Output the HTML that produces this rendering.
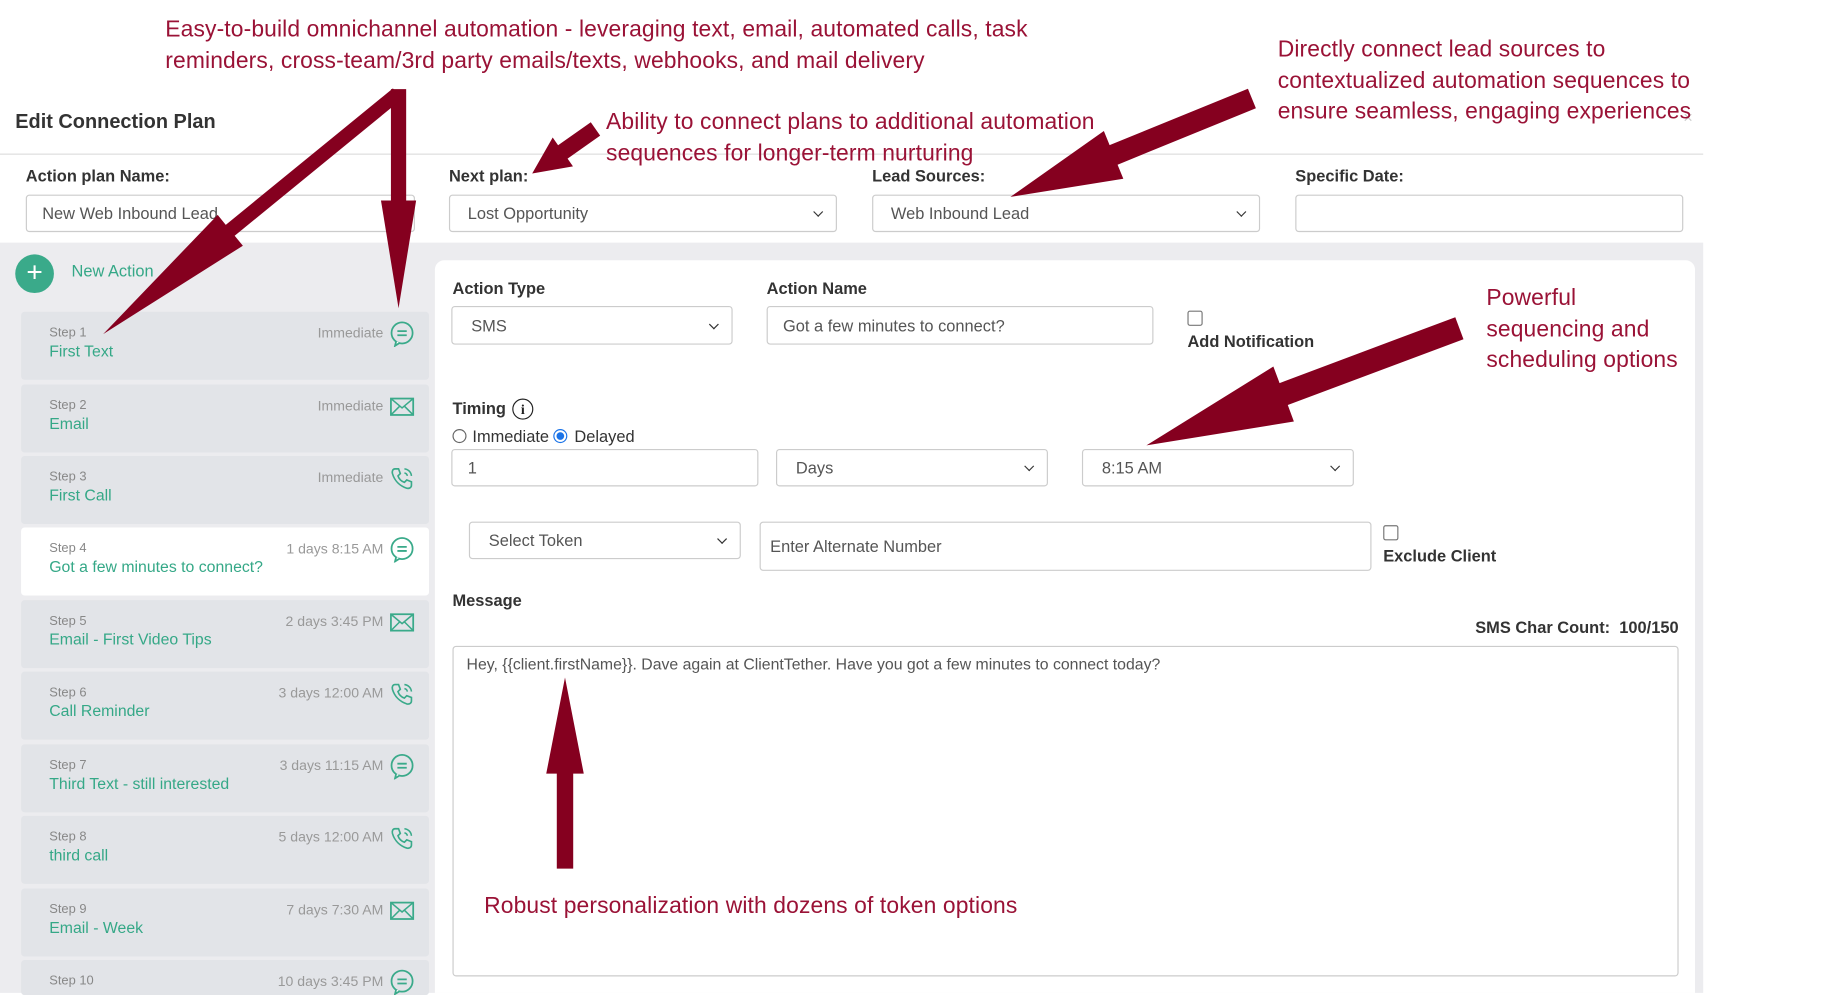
<!DOCTYPE html>
<html><head><meta charset="utf-8"><style>
html,body{margin:0;padding:0;background:#fff;overflow:hidden;width:1838px;height:989px}
#w{position:absolute;left:0;top:0;width:1568px;height:845px;transform:scale(1.1722);transform-origin:0 0;font-family:"Liberation Sans",Arial,sans-serif;color:#333}
.a{position:absolute}
.lbl{position:absolute;font-weight:bold;font-size:14px;color:#333}
.inp{position:absolute;border:1px solid #ccc;border-radius:3px;background:#fff;box-sizing:border-box;font-size:14px;color:#555;padding-left:13px;display:flex;align-items:center}
.sel:after{content:"";position:absolute;right:12px;top:50%;width:5px;height:5px;border-right:1.5px solid #333;border-bottom:1.5px solid #333;transform:translateY(-70%) rotate(45deg)}
.ann{position:absolute;color:#9a1236;font-size:19.5px;letter-spacing:0.1px;line-height:26.5px;white-space:nowrap}
.card{position:absolute;left:18px;width:348px;height:58px;background:#e2e4e8;border-radius:3px}
.card.on{background:#fff}
.st{position:absolute;left:24px;top:12px;font-size:11px;color:#888}
.nm{position:absolute;left:24px;top:26px;font-size:13.5px;color:#35a887}
.tm{position:absolute;right:39px;top:11px;font-size:12px;color:#999}
.ic{position:absolute;right:12px;top:8px;width:22px;height:22px}
.cb{position:absolute;width:11px;height:11px;border:1px solid #777;border-radius:2px;background:#fff}
</style></head><body><div id="w">
<div class="a" style="left:0;top:131px;width:1453px;height:1px;background:#ddd"></div>
<div class="a" style="left:0;top:207px;width:1453px;height:640px;background:#ececef"></div>
<div class="a" style="left:13px;top:94px;font-size:17px;font-weight:bold;color:#333">Edit Connection Plan</div>
<div class="a" style="left:1436px;top:92px;font-size:14px;color:#ccc">×</div>

<div class="lbl" style="left:22px;top:142px">Action plan Name:</div>
<div class="lbl" style="left:383px;top:142px">Next plan:</div>
<div class="lbl" style="left:744px;top:142px">Lead Sources:</div>
<div class="lbl" style="left:1105px;top:142px">Specific Date:</div>
<div class="inp" style="left:22px;top:166px;width:332px;height:32px">New Web Inbound Lead</div>
<div class="inp sel" style="left:383px;top:166px;width:331px;height:32px;padding-left:15px">Lost Opportunity</div>
<div class="inp sel" style="left:744px;top:166px;width:331px;height:32px;padding-left:15px">Web Inbound Lead</div>
<div class="inp" style="left:1105px;top:166px;width:331px;height:32px"></div>

<div class="a" style="left:13px;top:217px;width:33px;height:33px;border-radius:50%;background:#3aaa8a;color:#fff;font-size:24px;line-height:31px;text-align:center">+</div>
<div class="a" style="left:61px;top:223px;font-size:14px;color:#35a887">New Action</div>

<div id="cards"></div>

<div class="a" style="left:371px;top:222px;width:1075px;height:625px;background:#fff;border-radius:8px 8px 0 0"></div>
<div class="lbl" style="left:386px;top:238px">Action Type</div>
<div class="lbl" style="left:654px;top:238px">Action Name</div>
<div class="inp sel" style="left:385px;top:261px;width:240px;height:33px;padding-left:16px">SMS</div>
<div class="inp" style="left:654px;top:261px;width:330px;height:33px">Got a few minutes to connect?</div>
<div class="cb" style="left:1013px;top:265px"></div>
<div class="lbl" style="left:1013px;top:283px">Add Notification</div>

<div class="lbl" style="left:386px;top:340px">Timing</div>
<div class="a" style="left:437px;top:340px;width:16px;height:16px;border:1.5px solid #222;border-radius:50%;font:bold 12px 'Liberation Serif',serif;text-align:center;line-height:16px;color:#222">i</div>
<div class="a" style="left:386px;top:366px;width:10px;height:10px;border:1px solid #666;border-radius:50%"></div>
<div class="a" style="left:403px;top:364px;font-size:14px">Immediate</div>
<div class="a" style="left:472px;top:366px;width:10px;height:10px;border:1px solid #1a73e8;border-radius:50%;background:radial-gradient(#1a73e8 3px,#fff 3.5px)"></div>
<div class="a" style="left:490px;top:364px;font-size:14px">Delayed</div>
<div class="inp" style="left:385px;top:383px;width:262px;height:32px">1</div>
<div class="inp sel" style="left:662px;top:383px;width:232px;height:32px;padding-left:16px">Days</div>
<div class="inp sel" style="left:923px;top:383px;width:232px;height:32px;padding-left:16px">8:15 AM</div>

<div class="inp sel" style="left:400px;top:445px;width:232px;height:32px;padding-left:16px">Select Token</div>
<div class="inp" style="left:648px;top:445px;width:522px;height:42px;padding-left:8px">Enter Alternate Number</div>
<div class="cb" style="left:1180px;top:448px"></div>
<div class="lbl" style="left:1180px;top:466px">Exclude Client</div>
<div class="lbl" style="left:386px;top:504px">Message</div>
<div class="lbl" style="left:1200px;top:527px;width:232px;text-align:right">SMS Char Count:&nbsp;&nbsp;100/150</div>
<div class="a" style="left:386px;top:551px;width:1046px;height:282px;border:1px solid #ccc;border-radius:3px;box-sizing:border-box;padding:7px 11px;font-size:13.5px;color:#555">Hey, {{client.firstName}}. Dave again at ClientTether. Have you got a few minutes to connect today?</div>

<div class="ann" style="left:141px;top:12px">Easy-to-build omnichannel automation - leveraging text, email, automated calls, task<br>reminders, cross-team/3rd party emails/texts, webhooks, and mail delivery</div>
<div class="ann" style="left:517px;top:91px">Ability to connect plans to additional automation<br>sequences for longer-term nurturing</div>
<div class="ann" style="left:1090px;top:29px">Directly connect lead sources to<br>contextualized automation sequences to<br>ensure seamless, engaging experiences</div>
<div class="ann" style="left:1268px;top:241px">Powerful<br>sequencing and<br>scheduling options</div>
<div class="ann" style="left:413px;top:760px">Robust personalization with dozens of token options</div>

<svg id="arr" class="a" style="left:0;top:0" width="1568" height="845"></svg>
</div>
<script>
var cards=[["Step 1","First Text","Immediate","c"],["Step 2","Email","Immediate","e"],["Step 3","First Call","Immediate","p"],["Step 4","Got a few minutes to connect?","1 days 8:15 AM","c"],["Step 5","Email - First Video Tips","2 days 3:45 PM","e"],["Step 6","Call Reminder","3 days 12:00 AM","p"],["Step 7","Third Text - still interested","3 days 11:15 AM","c"],["Step 8","third call","5 days 12:00 AM","p"],["Step 9","Email - Week","7 days 7:30 AM","e"],["Step 10","","10 days 3:45 PM","c"]];
var ys=[266,328,389,450,512,573,635,696,758,819];
var icons={c:'<circle cx="11" cy="10" r="9" fill="none" stroke="#3aaa8a" stroke-width="1.5"/><path d="M6 17 L5 21 L9 18.5" fill="#fff" stroke="#3aaa8a" stroke-width="1.5"/><path d="M7 8.5h8M7 12h8" stroke="#3aaa8a" stroke-width="1.5"/>',
e:'<rect x="1.5" y="4" width="19" height="14" fill="none" stroke="#3aaa8a" stroke-width="1.5"/><path d="M1.5 4L11 12L20.5 4M1.5 18L9 10.5M20.5 18L13 10.5" fill="none" stroke="#3aaa8a" stroke-width="1.3"/>',
p:'<path d="M5 3 L8 3 L9.5 7 L7.5 9 C8.5 12 10 13.5 13 14.5 L15 12.5 L19 14 L19 17 C19 19 17 20 15 19.5 C9 17.5 4.5 13 2.8 7 C2.3 5 3 3 5 3Z" fill="none" stroke="#3aaa8a" stroke-width="1.4"/><path d="M13 6.5a3 3 0 0 1 2.5 2.5M13 3a6.5 6.5 0 0 1 6 6" fill="none" stroke="#3aaa8a" stroke-width="1.3"/>'};
var h="";cards.forEach(function(c,i){h+='<div class="card'+(i==3?' on':'')+'" style="top:'+ys[i]+'px;height:'+(i==9?30:58)+'px"><div class="st">'+c[0]+'</div><div class="nm">'+c[1]+'</div><div class="tm">'+c[2]+'</div><svg class="ic" viewBox="0 0 22 22">'+icons[c[3]]+'</svg></div>';});
document.getElementById("cards").innerHTML=h;
function arrow(x1,y1,x2,y2,sw,hw,hl){var dx=x2-x1,dy=y2-y1,L=Math.hypot(dx,dy),ux=dx/L,uy=dy/L,nx=-uy,ny=ux;var bx=x2-ux*hl,by=y2-uy*hl;function p(x,y){return x.toFixed(1)+","+y.toFixed(1)}
return '<polygon fill="#85001f" points="'+[p(x1+nx*sw/2,y1+ny*sw/2),p(bx+nx*sw/2,by+ny*sw/2),p(bx+nx*hw/2,by+ny*hw/2),p(x2,y2),p(bx-nx*hw/2,by-ny*hw/2),p(bx-nx*sw/2,by-ny*sw/2),p(x1-nx*sw/2,y1-ny*sw/2)].join(" ")+'"/>';}
document.getElementById("arr").innerHTML=
arrow(340,76,340,263,13,30,92)+arrow(339,80,88,285,12,34,140)+arrow(508,110,454,148,14,30,32)+arrow(1068,84,862,168,18,44,95)+arrow(1245,280,978,380,20,50,125)+arrow(482,741,482,578,14,32,82);
</script>
</body></html>
